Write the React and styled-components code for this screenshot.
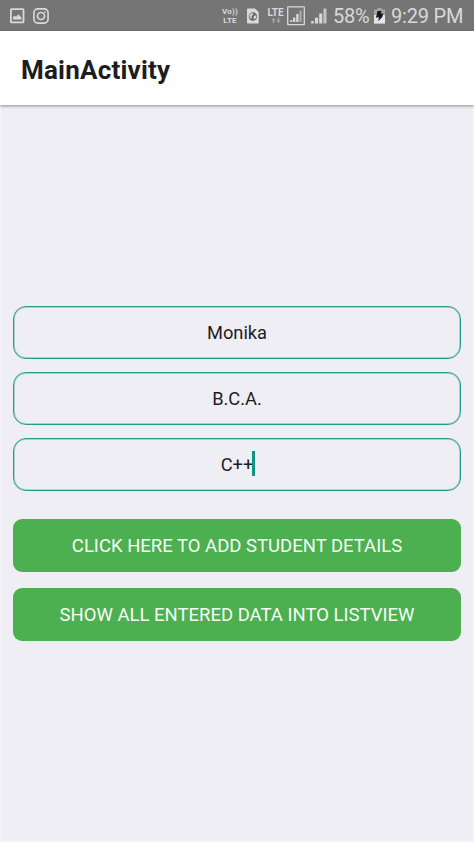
import React, { Component } from 'react';
import styled, { createGlobalStyle, css } from 'styled-components';

const theme = {
  page: '#efeef5',
  status: '#757575',
  statusInk: '#d9d9d9',
  ink: '#1d1d1f',
  teal: '#269c8b',
  cursor: '#0f9484',
  green: '#4caf50',
};

const GlobalStyle = createGlobalStyle`
  * {
    box-sizing: border-box;
  }
  body {
    margin: 0;
    background: ${theme.page};
    font-family: Roboto, 'Liberation Sans', sans-serif;
    color: ${theme.ink};
  }
`;

const Screen = styled.div`
  display: flex;
  flex-direction: column;
  width: 474px;
  height: 842px;
  overflow: hidden;
  background: ${theme.page};
`;

const StatusBar = styled.div`
  display: flex;
  flex: none;
  height: 31px;
  padding: 0 11px 0 9px;
  align-items: center;
  justify-content: space-between;
  background: ${theme.status};
  color: ${theme.statusInk};
  svg {
    display: block;
    flex: none;
  }
`;

const StatusGroup = styled.div`
  display: flex;
  align-items: center;
  gap: ${(props) => props.$gap}px;
`;

const NetworkLabel = styled.div`
  display: flex;
  flex-direction: column;
  align-items: center;
  width: ${(props) => props.$width}px;
  margin-right: ${(props) => props.$after}px;
  font-size: ${(props) => props.$size}px;
  font-weight: 700;
  line-height: ${(props) => props.$line}px;
  letter-spacing: ${(props) => props.$spacing || 0}px;
  white-space: nowrap;
`;

const StatusIcon = styled.div`
  margin-right: ${(props) => props.$after}px;
`;

const StatusText = styled.span`
  width: ${(props) => props.$width}px;
  margin-right: ${(props) => props.$after || 0}px;
  padding-top: 2px;
  font-size: 20px;
  line-height: 29px;
  letter-spacing: -0.2px;
  white-space: nowrap;
`;

const AppBar = styled.header`
  display: flex;
  flex: none;
  align-items: center;
  height: 74px;
  padding: 3px 21px 0;
  background: #fff;
  box-shadow: 0 1px 3px rgba(0, 0, 0, 0.42);
  z-index: 1;
`;

const Title = styled.h1`
  margin: 0;
  font-size: 26px;
  font-weight: 700;
  line-height: 32px;
  letter-spacing: 0.22px;
`;

const Form = styled.main`
  display: flex;
  flex: 1;
  flex-direction: column;
  padding: 201px 11px 0;
  border: solid #f3f2f9;
  border-width: 0 2px 2px;
`;

const rowBox = css`
  display: flex;
  flex: none;
  align-items: center;
  justify-content: center;
  width: 100%;
  height: 53px;
  line-height: 24px;
`;

const Fields = styled.div`
  display: flex;
  flex-direction: column;
  gap: 13px;
`;

const Field = styled.div`
  ${rowBox};
  padding-top: 1px;
  border: 1px solid ${theme.teal};
  border-radius: 13px;
  box-shadow: inset 0 0 0 1px rgba(38, 156, 139, 0.35);
  font-size: 18.3px;
`;

const Cursor = styled.span`
  width: 3px;
  height: 25px;
  margin: -3px -2px 0 -1px;
  background: ${theme.cursor};
`;

const Buttons = styled.div`
  display: flex;
  flex-direction: column;
  gap: 16px;
  margin-top: 28px;
`;

const Button = styled.button`
  ${rowBox};
  padding: 0;
  border: 0;
  border-radius: 9px;
  background: ${theme.green};
  color: #f6fff6;
  font-family: inherit;
  font-size: 18.5px;
  text-transform: uppercase;
`;

const GalleryIcon = () => (
  <svg width="16" height="16" viewBox="0 0 16 16" fill="none">
    <rect x="1.9" y="1.2" width="12.6" height="13.2" rx="0.6" stroke={theme.statusInk} strokeWidth="1.8" />
    <path d="M4 11.5V9l2-1.2 1.2 1 2-2.6 3.2 3.4v1.9z" fill={theme.statusInk} />
  </svg>
);

const CameraIcon = () => (
  <svg width="16" height="16" viewBox="0 0 16 16" fill="none" stroke={theme.statusInk}>
    <rect x="0.9" y="0.9" width="14.2" height="14.2" rx="3.8" strokeWidth="1.6" />
    <circle cx="8" cy="8" r="3.5" strokeWidth="1.7" />
    <circle cx="12" cy="4" r="0.5" strokeWidth="1" />
  </svg>
);

const SimGlobeIcon = () => (
  <svg width="12" height="16" viewBox="0 0 12 16">
    <path d="M0.8 0.5H8L11.7 4v10.7q0 .8-.8.8H.8q-.8 0-.8-.8V1.3Q0 .5.8.5z" fill={theme.statusInk} />
    <circle cx="5.9" cy="8.5" r="4.2" fill="#686868" />
    <path d="M2.6 6.7 4.8 5l1.5.8-.8 1.6-1.4.6.7 1.6-.6 1.4-1.7-2zM7 8l2.2-.7.2 2-2 2.3-1-1.7z" fill={theme.statusInk} />
  </svg>
);

const DataArrows = () => (
  <svg width="10" height="7" viewBox="0 -1 10 7" fill="#a8a8a8">
    <path d="M2.5 0 4.6 2.2H3.2V5H1.8V2.2H.4zM6.8 0h1.4v2.8h1.4L7.5 5 5.4 2.8h1.4z" />
  </svg>
);

const Bars = ({ boxed }) =>
  boxed ? (
    <svg width="18" height="20" viewBox="0 0 18 20" fill={theme.statusInk}>
      <rect x="0.7" y="0.9" width="16.6" height="17.8" rx="0.5" fill="none" stroke={theme.statusInk} strokeWidth="1.3" />
      <path d="M3.4 14h1.8v2H3.4zM6 11.5h2.3V16H6zM9.2 8h2.3v8H9.2z" />
      <path d="M12.4 4.5h2.3V16h-2.3z" opacity="0.5" />
    </svg>
  ) : (
    <svg width="16" height="16" viewBox="0 0 16 16" fill={theme.statusInk}>
      <path d="M0.2 13h2.6v2.4H.2zM4 9.8h3.1v5.6H4zM8.2 5.4h3.1v10H8.2z" />
      <path d="M12.4.6h3.1v14.8h-3.1z" opacity="0.8" />
    </svg>
  );

const BatteryIcon = () => (
  <svg width="11" height="16" viewBox="0 0 11 16">
    <path d="M3.5 0h4v1.5H11V15.5H0V1.5h3.5z" fill="#a5a5a5" />
    <path d="M0 7h11v8.5H0z" fill="#e6e6e6" />
    <path d="M3.5 3h4L6.9 6l2.5-.7L8.3 9 4.2 13.3 5 9.2 2 9.8z" fill="#161616" />
  </svg>
);

export default class App extends Component {
  constructor(props) {
    super(props);

    this.state = {
      fields: ['Monika', 'B.C.A.', 'C++'],
      focused: 2,
    };
  }

  renderStatusBar() {
    return (
      <StatusBar>
        <StatusGroup $gap={8}>
          <GalleryIcon />
          <CameraIcon />
        </StatusGroup>
        <StatusGroup $gap={0}>
          <NetworkLabel $width={16} $after={9} $size={8} $line={9} $spacing={0.2}>
            <span>Vo))</span>
            <span>LTE</span>
          </NetworkLabel>
          <StatusIcon $after={8}>
            <SimGlobeIcon />
          </StatusIcon>
          <NetworkLabel $width={17} $after={3} $size={10} $line={9}>
            <span>LTE</span>
            <DataArrows />
          </NetworkLabel>
          <StatusIcon $after={6}>
            <Bars boxed />
          </StatusIcon>
          <StatusIcon $after={6}>
            <Bars />
          </StatusIcon>
          <StatusText $width={37} $after={4}>58%</StatusText>
          <StatusIcon $after={6}>
            <BatteryIcon />
          </StatusIcon>
          <StatusText $width={72}>9:29 PM</StatusText>
        </StatusGroup>
      </StatusBar>
    );
  }

  render() {
    const { fields, focused } = this.state;

    return (
      <Screen>
        <GlobalStyle />
        {this.renderStatusBar()}
        <AppBar>
          <Title>MainActivity</Title>
        </AppBar>
        <Form>
          <Fields>
            {fields.map((value, i) => (
              <Field key={value}>
                {value}
                {i === focused && <Cursor />}
              </Field>
            ))}
          </Fields>
          <Buttons>
            <Button type="button">Click here to add student details</Button>
            <Button type="button">Show all entered data into listview</Button>
          </Buttons>
        </Form>
      </Screen>
    );
  }
}
